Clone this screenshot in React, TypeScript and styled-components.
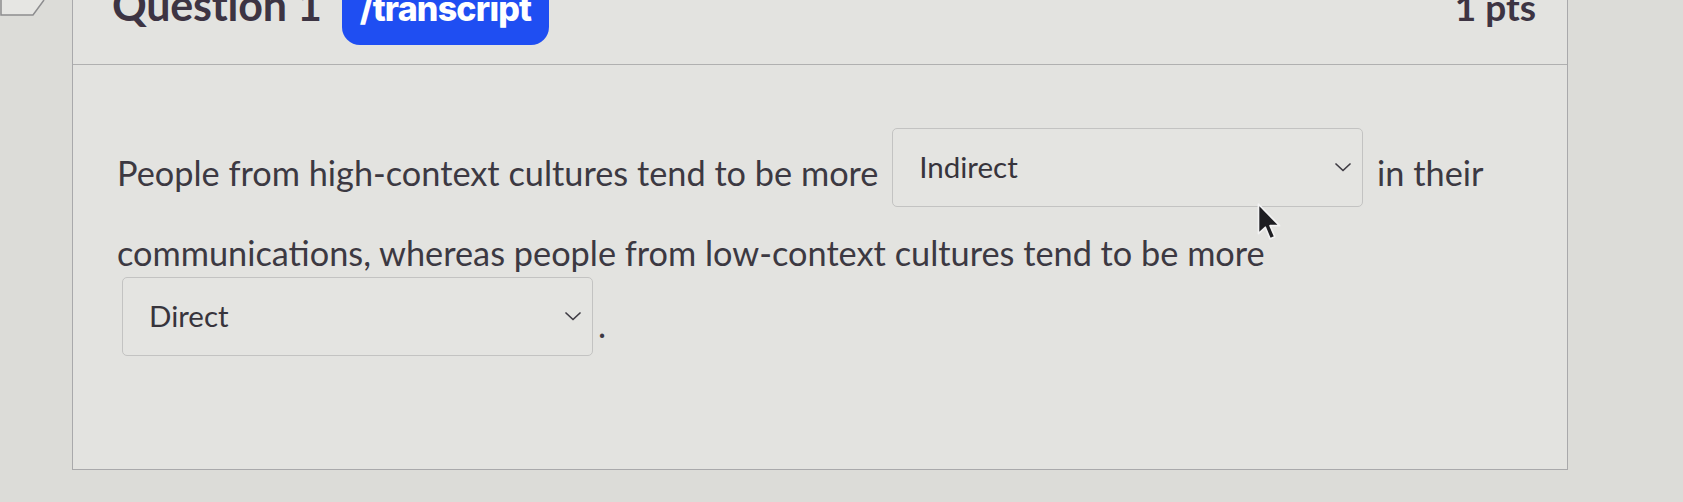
import React from "react";
import styled, { createGlobalStyle } from "styled-components";

const GlobalStyle = createGlobalStyle`
  html, body {
    margin: 0;
    padding: 0;
    background: #dcdcd8;
    overflow: hidden;
  }
  body {
    font-family: Lato, "Noto Sans", sans-serif;
    color: #3c3942;
  }
`;

const Page = styled.div`
  position: relative;
  display: flex;
  width: 1683px;
  height: 502px;
  overflow: hidden;
`;

const Gutter = styled.div`
  width: 72px;
  flex: none;
  display: flex;
  flex-direction: column;
`;

const Card = styled.section`
  width: 1496px;
  flex: none;
  margin-top: -22px;
  align-self: flex-start;
  background: #e3e3e0;
  border: 1px solid #a9a9ab;
  box-sizing: border-box;
`;

const Header = styled.header`
  display: flex;
  align-items: baseline;
  padding: 0 31px 19px 39px;
  border-bottom: 1.5px solid #b0b0b0;
`;

const Title = styled.h2`
  margin: 0;
  font-family: Lato, sans-serif;
  font-weight: 700;
  font-size: 43px;
  line-height: 52px;
  color: #3d3443;
  letter-spacing: -0.2px;
`;

const Badge = styled.span`
  margin-left: 20px;
  padding: 8px 18px 17px 18px;
  border-radius: 18px;
  background: #1f4ef2;
  color: #ffffff;
  font-family: Inter, "Noto Sans", sans-serif;
  font-weight: 800;
  font-size: 34px;
  line-height: 38px;
  letter-spacing: -0.8px;
`;

const Points = styled.span`
  margin-left: auto;
  font-family: Lato, sans-serif;
  font-weight: 700;
  font-size: 37px;
  line-height: 44px;
  color: #3d3443;
`;

const Body = styled.div`
  height: 404px;
  box-sizing: border-box;
  padding: 62.5px 40px 0 44px;
`;

const Sentence = styled.p`
  margin: 0;
  font-size: 34.3px;
  line-height: 46.5px;
  color: #3c3942;
`;

const Select = styled.span<{ $mt: number; $mb: number; $lift: number }>`
  display: inline-flex;
  align-items: center;
  justify-content: space-between;
  box-sizing: border-box;
  width: 471px;
  height: 79px;
  margin: ${(p) => p.$mt}px 5px ${(p) => p.$mb}px 5px;
  padding: 0 10px 0 26px;
  vertical-align: ${(p) => p.$lift}px;
  border: 1.5px solid #c3c3c2;
  border-radius: 5px;
  background: #e4e4e1;
  font-size: 29.5px;
  line-height: 1;
  color: #37343c;
`;

const Chevron = () => (
  <svg width="18" height="11" viewBox="0 0 18 11" fill="none">
    <path d="M2 2 L9 8.5 L16 2" stroke="#3f3c44" strokeWidth="1.7" strokeLinecap="round" strokeLinejoin="round" />
  </svg>
);

const CornerMark = () => (
  <svg width="50" height="18" viewBox="0 0 50 18" fill="none">
    <path d="M1 0 L1 15 L33 15 L44 0" stroke="#8d8d8f" strokeWidth="1.5" fill="#e6e6e3" />
  </svg>
);

const Cursor = styled.svg`
  position: absolute;
  left: 1255px;
  top: 202px;
`;

export default function App() {
  return (
    <>
      <GlobalStyle />
      <Page>
        <Gutter>
          <CornerMark />
        </Gutter>
        <Card>
          <Header>
            <Title>Question 1</Title>
            <Badge>/transcript</Badge>
            <Points>1 pts</Points>
          </Header>
          <Body>
            <Sentence>
              People from high-context cultures tend to be more{" "}
              <Select $mt={0} $mb={23.5} $lift={7.5}>
                <span>Indirect</span>
                <Chevron />
              </Select>{" "}
              in their communications, whereas people from low-context cultures tend to be more{" "}
              <Select $mt={0} $mb={0} $lift={10}>
                <span>Direct</span>
                <Chevron />
              </Select>
              .
            </Sentence>
          </Body>
        </Card>
        <Cursor width="28" height="40" viewBox="0 0 26 38">
          <path d="M3 2 L3 30 L9.5 24 L14 35 L18.5 33 L14 22.5 L23 22.5 Z" fill="#1e1e22" stroke="#f2f2f2" strokeWidth="1.6" strokeLinejoin="round" />
        </Cursor>
      </Page>
    </>
  );
}
